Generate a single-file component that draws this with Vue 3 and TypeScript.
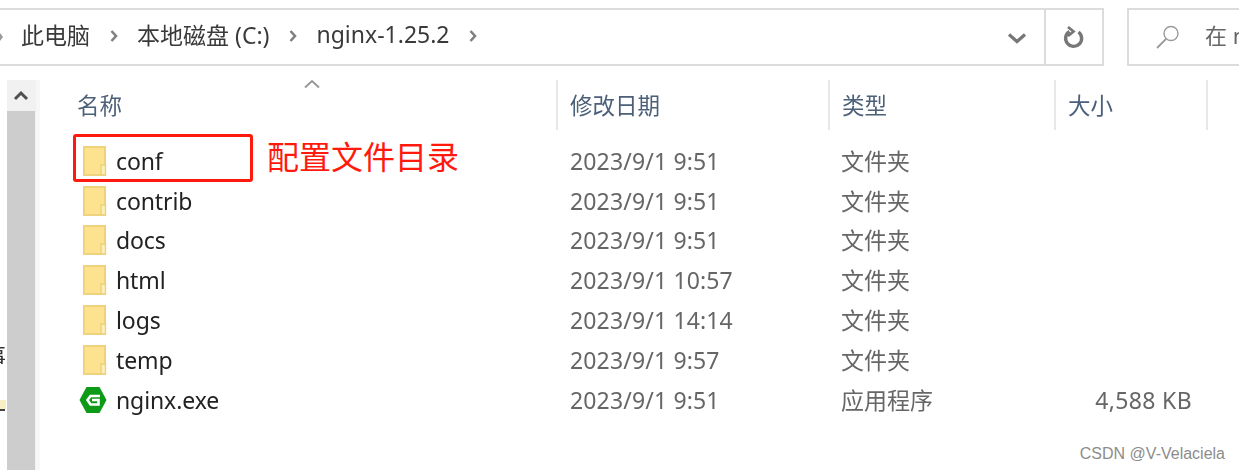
<script setup lang="ts">
interface Row { name: string; date: string; type: string; size?: string; exe?: boolean }
const rows: Row[] = [
  { name: 'conf', date: '2023/9/1 9:51', type: '文件夹' },
  { name: 'contrib', date: '2023/9/1 9:51', type: '文件夹' },
  { name: 'docs', date: '2023/9/1 9:51', type: '文件夹' },
  { name: 'html', date: '2023/9/1 10:57', type: '文件夹' },
  { name: 'logs', date: '2023/9/1 14:14', type: '文件夹' },
  { name: 'temp', date: '2023/9/1 9:57', type: '文件夹' },
  { name: 'nginx.exe', date: '2023/9/1 9:51', type: '应用程序', size: '4,588 KB', exe: true },
]
const crumbs = ['此电脑', '本地磁盘 (C:)', 'nginx-1.25.2']
</script>

<template>
  <div class="page">
    <div class="soft">
      <div class="top">
        <div class="address">
          <span class="lead-chev"></span>
          <div class="crumbs">
            <template v-for="c in crumbs" :key="c">
              <span class="crumb">{{ c }}</span>
              <svg class="sep" width="8" height="12" viewBox="0 0 8 12"><path d="M1.5 1 6 6 1.5 11" fill="none" stroke="#808080" stroke-width="2.6" /></svg>
            </template>
          </div>
          <svg class="drop" width="20" height="12" viewBox="0 0 20 12"><path d="M2 2.5 10 9.5 18 2.5" fill="none" stroke="#777" stroke-width="3.2" /></svg>
          <div class="refresh">
            <svg width="24" height="26" viewBox="0 0 24 26"><path d="M7.5 7.5A8 8 0 1 0 16.5 8" fill="none" stroke="#777" stroke-width="3.4" /><path d="M6 3 11.5 7.5 6 12" fill="none" stroke="#777" stroke-width="2.8" /></svg>
          </div>
        </div>
        <div class="search">
          <svg class="lens" width="28" height="28" viewBox="0 0 28 28"><circle cx="17" cy="10.5" r="7" fill="none" stroke="#9a9a9a" stroke-width="1.4" /><path d="M12 16 3 25" stroke="#9a9a9a" stroke-width="1.8" /></svg>
          <span class="search-text">在 n</span>
        </div>
      </div>

      <div class="body">
        <div class="sliver">
          <span class="sliver-glyph">事</span>
          <span class="sliver-mark"></span>
          <span class="sliver-dark"></span>
        </div>
        <div class="scrollbar">
          <div class="scroll-up">
            <svg width="16" height="11" viewBox="0 0 16 11"><path d="M2 9 8 3 14 9" fill="none" stroke="#505050" stroke-width="3" /></svg>
          </div>
          <div class="thumb"></div>
        </div>
        <div class="list">
          <div class="head">
            <svg class="sort" width="18" height="10" viewBox="0 0 18 10"><path d="M2 8.5 9 2 16 8.5" fill="none" stroke="#999" stroke-width="2" /></svg>
            <div class="hcell c-name">名称</div>
            <div class="hcell c-date">修改日期</div>
            <div class="hcell c-type">类型</div>
            <div class="hcell c-size">大小</div>
            <div class="hcell c-rest"></div>
          </div>
          <div class="rows">
            <div v-for="r in rows" :key="r.name" class="row">
              <div class="c-name name-cell">
                <svg v-if="r.exe" class="icon exe" width="28" height="28" viewBox="0 0 28 28">
                  <path d="M7.5 1H20.5L27.5 14 20.5 27H7.5L.5 14Z" fill="#0c9a18" />
                  <path d="M21 10H11.5L8.5 14 11.5 18.5H19.5V14H13" fill="none" stroke="#fff" stroke-width="2.6" />
                </svg>
                <svg v-else class="icon" width="24" height="30" viewBox="0 0 24 30">
                  <rect x="1" y="1" width="21" height="28" fill="#fde28f" stroke="#f0d27c" stroke-width="2" />
                  <path d="M18 29V19H22.5V29Z" fill="#fdeeb8" stroke="#ecd07c" stroke-width="1.4" />
                </svg>
                <span class="name">{{ r.name }}</span>
              </div>
              <div class="c-date cell">{{ r.date }}</div>
              <div class="c-type cell type">{{ r.type }}</div>
              <div class="c-size cell size">{{ r.size }}</div>
            </div>
          </div>
        </div>
      </div>
    </div>

    <div class="box"></div>
    <div class="note">配置文件目录</div>
    <div class="mark">CSDN @V-Velaciela</div>
  </div>
</template>

<style>
html, body { margin: 0; background: #fff; }
</style>

<style scoped>
.page {
  position: relative;
  width: 1239px;
  height: 470px;
  overflow: hidden;
  background: #fff;
  font-family: "Noto Sans", "Noto Sans CJK SC", sans-serif;
}
.soft { filter: blur(0.6px); height: 470px; overflow: hidden; }
.top { display: flex; padding-top: 8px; height: 66px; box-sizing: border-box; }
.address {
  width: 1104px;
  box-sizing: border-box;
  display: flex;
  align-items: center;
  border: 2px solid #dcdcdc;
  border-left: 0;
}
.lead-chev {
  width: 3px;
  height: 8px;
  background: #9a9a9a;
  clip-path: polygon(0 0, 100% 50%, 0 100%);
}
.crumbs {
  flex: 1;
  display: flex;
  align-items: center;
  margin-left: 18px;
  margin-top: -2px;
  font-size: 23px;
  color: #3a3a3a;
}
.crumb { white-space: nowrap; margin-top: -4px; }
.sep { margin: 0 19.5px; }
.drop { margin-right: 17px; margin-top: 2px; }
.refresh {
  width: 58px;
  height: 100%;
  border-left: 2px solid #dcdcdc;
  display: flex;
  align-items: center;
  justify-content: center;
  box-sizing: border-box;
}
.search {
  flex: 1;
  min-width: 0;
  margin-left: 23px;
  border: 2px solid #dcdcdc;
  border-right: 0;
  display: flex;
  align-items: center;
  padding-left: 25px;
  font-size: 22px;
  color: #666;
  white-space: nowrap;
  overflow: hidden;
}
.lens { flex: none; }
.search-text { flex: none; margin-left: 23px; margin-top: -6px; }
.body { display: flex; height: 404px; }
.sliver { width: 7px; position: relative; overflow: hidden; }
.sliver-glyph {
  position: absolute;
  left: -16px;
  top: 272px;
  font-size: 22px;
  color: #333;
}
.sliver-mark {
  position: absolute;
  left: 0;
  top: 334px;
  width: 6px;
  height: 9px;
  background: #f8efc4;
}
.sliver-dark {
  position: absolute;
  left: 0;
  top: 343px;
  width: 5px;
  height: 2px;
  background: #444;
}
.scrollbar {
  width: 29px;
  margin-top: 14px;
  background: #f1f1f1;
  display: flex;
  flex-direction: column;
  box-shadow: 4px 0 0 #f7f7f7;
}
.scroll-up {
  height: 31px;
  display: flex;
  align-items: center;
  justify-content: center;
  padding-right: 2px;
}
.thumb { flex: 1; background: #cdcdcd; margin-right: 1px; }
.list { flex: 1; min-width: 0; }
.head {
  display: flex;
  height: 50px;
  margin-top: 14px;
  position: relative;
}
.sort { position: absolute; left: 267px; top: -1px; }
.hcell {
  box-sizing: border-box;
  border-right: 2px solid #e8e8e8;
  font-size: 22.5px;
  color: #4c607a;
  display: flex;
  align-items: center;
  padding-bottom: 2px;
  height: 50px;
}
.c-name { width: 522px; flex: none; box-sizing: border-box; padding-left: 41px; }
.c-date { width: 272px; flex: none; box-sizing: border-box; padding-left: 12px; }
.c-type { width: 226px; flex: none; box-sizing: border-box; padding-left: 12px; }
.c-size { width: 152px; flex: none; box-sizing: border-box; padding-left: 12px; }
.c-rest { border-right: 0; flex: 1; }
.rows { padding-top: 11px; }
.row { display: flex; align-items: center; height: 39.8px; font-size: 23px; }
.name-cell { display: flex; align-items: center; padding-left: 47px; }
.icon { flex: none; }
.icon.exe { margin-left: -4px; margin-right: 0; }
.name { margin-left: 9px; color: #222; white-space: nowrap; letter-spacing: -0.1px; }
.cell { color: #666; white-space: nowrap; }
.c-date.cell { letter-spacing: 0.15px; }
.type { padding-left: 11px; padding-bottom: 2px; }
.size { text-align: right; padding: 0 16px 0 0; letter-spacing: 0.35px; }
.box {
  position: absolute;
  left: 73px;
  top: 134px;
  width: 180px;
  height: 48px;
  box-sizing: border-box;
  border: 3px solid #ff1a0d;
  border-radius: 3px;
}
.note {
  position: absolute;
  left: 267px;
  top: 134px;
  font-size: 32px;
  line-height: 46px;
  color: #ff1a0d;
  white-space: nowrap;
}
.mark {
  position: absolute;
  right: 14px;
  top: 444px;
  font-family: "Liberation Sans", sans-serif;
  font-size: 16px;
  line-height: 20px;
  color: #8c8c8c;
  white-space: nowrap;
}
</style>
